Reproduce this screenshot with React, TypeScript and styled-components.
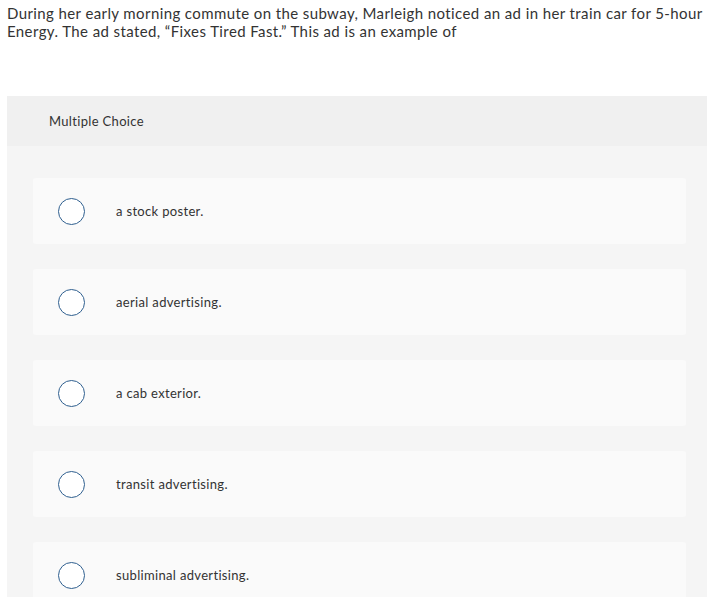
import styled, { createGlobalStyle } from "styled-components";

const choices = [
  "a stock poster.",
  "aerial advertising.",
  "a cab exterior.",
  "transit advertising.",
  "subliminal advertising."
];

const GlobalStyle = createGlobalStyle`
  html, body {
    margin: 0;
    padding: 0;
    background: #ffffff;
    font-family: Lato, "Open Sans", Arial, sans-serif;
    color: #333333;
  }
`;

const App = () => {
  return (
    <Page>
      <GlobalStyle />
      <Question>
        During her early morning commute on the subway, Marleigh noticed an ad
        in her train car for 5-hour Energy. The ad stated, “Fixes Tired Fast.”
        This ad is an example of
      </Question>
      <Panel>
        <Header>Multiple Choice</Header>
        <Choices>
          {choices.map((c) => (
            <Choice key={c}>
              <Radio />
              <Label>{c}</Label>
            </Choice>
          ))}
        </Choices>
      </Panel>
    </Page>
  );
};

const Page = styled.div`
  padding: 4px 0 0 7px;
  height: 597px;
  overflow: hidden;
  box-sizing: border-box;
`;
const Question = styled.p`
  margin: 0;
  font-size: 15px;
  line-height: 18px;
  letter-spacing: 0.4px;
`;
const Panel = styled.div`
  margin-top: 56px;
  background: #f5f5f5;
`;
const Header = styled.div`
  height: 50px;
  display: flex;
  align-items: center;
  padding-left: 42px;
  background: #f0f0f0;
  font-size: 13px;
  letter-spacing: 0.33px;
`;
const Choices = styled.div`
  display: flex;
  flex-direction: column;
  gap: 25px;
  padding: 32px 21px 40px 26px;
`;
const Choice = styled.div`
  height: 66px;
  display: flex;
  align-items: center;
  padding-left: 25px;
  background: #fafafa;
  border-radius: 3px;
`;
const Radio = styled.span`
  width: 25px;
  height: 25px;
  border: 1.5px solid #2f5f8f;
  border-radius: 50%;
  background: #ffffff;
  flex-shrink: 0;
`;
const Label = styled.span`
  margin-left: 31px;
  font-size: 13px;
  letter-spacing: 0.33px;
`;

export default App;
